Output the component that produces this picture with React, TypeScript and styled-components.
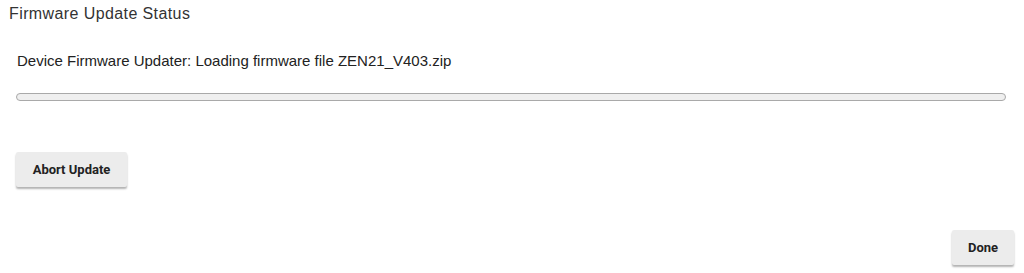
import React from "react";
import styled, { createGlobalStyle } from "styled-components";

const GlobalStyle = createGlobalStyle`
  html, body {
    margin: 0;
    padding: 0;
    background: #ffffff;
  }
  body {
    font-family: "Liberation Sans", Arial, sans-serif;
    color: #212121;
  }
`;

const Dialog = styled.div`
  display: flex;
  flex-direction: column;
  width: 1024px;
  height: 273px;
  box-sizing: border-box;
  background: #ffffff;
`;

const Title = styled.div`
  padding: 4px 9px 0;
  height: 22px;
  font-size: 16px;
  letter-spacing: 0.4px;
  line-height: 20px;
  color: #333333;
`;

const Content = styled.div`
  display: flex;
  flex-direction: column;
  align-items: flex-start;
  padding: 0 18px 0 16px;
  flex: 1;
`;

const Message = styled.div`
  margin-top: 25px;
  padding-left: 1px;
  font-size: 15px;
  line-height: 20px;
  color: #222222;
`;

const Progress = styled.div`
  align-self: stretch;
  margin-top: 22px;
  height: 6px;
  border: 1px solid #a9a9a9;
  border-radius: 4px;
  background: #efefef;
  overflow: hidden;
`;

const ProgressFill = styled.div`
  height: 100%;
  background: #4a90e2;
`;

const Button = styled.button`
  height: 35px;
  padding: 0 16px;
  border: none;
  border-radius: 2px;
  background: #ececec;
  box-shadow: 0 2px 2px rgba(0, 0, 0, 0.3);
  font-family: Roboto, "Liberation Sans", Arial, sans-serif;
  font-size: 13px;
  font-weight: 700;
  color: #222222;
  cursor: pointer;
`;

const AbortButton = styled(Button)`
  margin-top: 51px;
  width: 111px;
`;

const Footer = styled.div`
  display: flex;
  justify-content: flex-end;
  padding: 0 10px 8px 0;
`;

const DoneButton = styled(Button)`
  width: 62px;
`;

const App: React.FC = () => {
  const progress = 0;
  return (
    <>
      <GlobalStyle />
      <Dialog>
        <Title>Firmware Update Status</Title>
        <Content>
          <Message>
            Device Firmware Updater: Loading firmware file ZEN21_V403.zip
          </Message>
          <Progress>
            <ProgressFill style={{ width: `${progress}%` }} />
          </Progress>
          <AbortButton>Abort Update</AbortButton>
        </Content>
        <Footer>
          <DoneButton>Done</DoneButton>
        </Footer>
      </Dialog>
    </>
  );
};

export default App;
